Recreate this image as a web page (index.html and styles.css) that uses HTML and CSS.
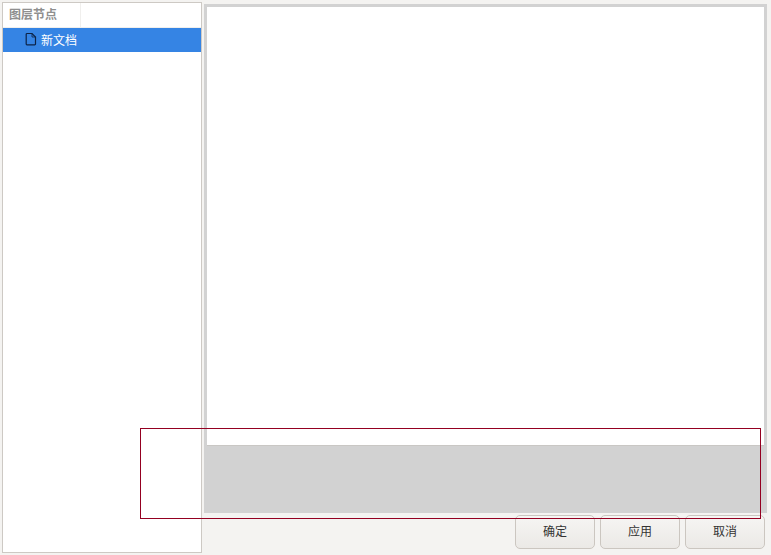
FILE: index.html
```html
<!DOCTYPE html>
<html lang="zh">
<head>
<meta charset="utf-8">
<title>图层节点</title>
<link rel="stylesheet" href="styles.css">
</head>
<body>
<div class="app">
  <aside class="tree">
    <div class="tree-head"><div class="tree-title">图层节点</div></div>
    <div class="tree-row">
      <svg class="doc-icon" width="12" height="14" viewBox="0 0 12 14"><path d="M2 1.500h5l3.500 3.500v7a.8.8 0 0 1-.8.800H2a.8.8 0 0 1-.8-.8V2.300a.8.800 0 0 1 .8-.8z" fill="none" stroke="#0d2347" stroke-width="1.200"/><path d="M7 1.500v3.500h3.500" fill="none" stroke="#0d2347" stroke-width="0.800"/></svg>
      <span class="row-label">新文档</span>
    </div>
  </aside>
  <main class="main">
    <div class="preview"><div class="canvas"></div></div>
    <div class="actions">
      <button class="btn">确定</button>
      <button class="btn">应用</button>
      <button class="btn">取消</button>
    </div>
  </main>
</div>
<div class="marker"></div>
</body>
</html>
```
FILE: styles.css
```css
html, body { margin: 0; height: 100%; }
body {
  background: #f4f3f1;
  font-family: "Liberation Sans", "Noto Sans CJK SC", sans-serif;
  font-size: 12px;
  overflow: hidden;
}
.app {
  display: flex;
  width: 771px;
  height: 555px;
  box-sizing: border-box;
  padding: 2px 4px 2px 2px;
  gap: 2px;
}
.tree {
  width: 200px;
  box-sizing: border-box;
  flex: none;
  background: #fff;
  border: 1px solid #cdc9c4;
}
.tree-head {
  height: 24px;
  border-bottom: 1px solid #f0efed;
}
.tree-title {
  width: 71px;
  height: 24px;
  padding-left: 6px;
  line-height: 24px;
  color: #8f8f8f;
  font-weight: bold;
  border-right: 1px solid #f0efed;
}
.tree-row {
  height: 24px;
  display: flex;
  align-items: center;
  gap: 4px;
  padding-left: 22px;
  background: #3584e4;
  color: #fff;
}
.row-label { margin-top: -2px; }
.doc-icon { flex: none; margin-top: -2px; }
.main {
  flex: 1;
  display: flex;
  flex-direction: column;
  min-width: 0;
  padding-top: 2px;
}
.preview {
  height: 509px;
  box-sizing: border-box;
  background: #d2d2d2;
  padding: 3px 3px 68px;
}
.canvas {
  height: 438px;
  background: #fff;
  border-bottom: 1px solid #c9c7c4;
}
.actions {
  display: flex;
  justify-content: flex-end;
  gap: 5px;
  padding: 2px 2px 0 0;
}
.btn {
  width: 80px;
  height: 34px;
  padding: 0 0 4px;
  border: 1px solid #cbc6c0;
  border-radius: 5px;
  background: linear-gradient(#f6f5f3, #ebe9e6);
  color: #333;
  font: inherit;
}
.marker {
  position: absolute;
  left: 140px;
  top: 428px;
  width: 619px;
  height: 89px;
  border: 1px solid #940021;
}
```
